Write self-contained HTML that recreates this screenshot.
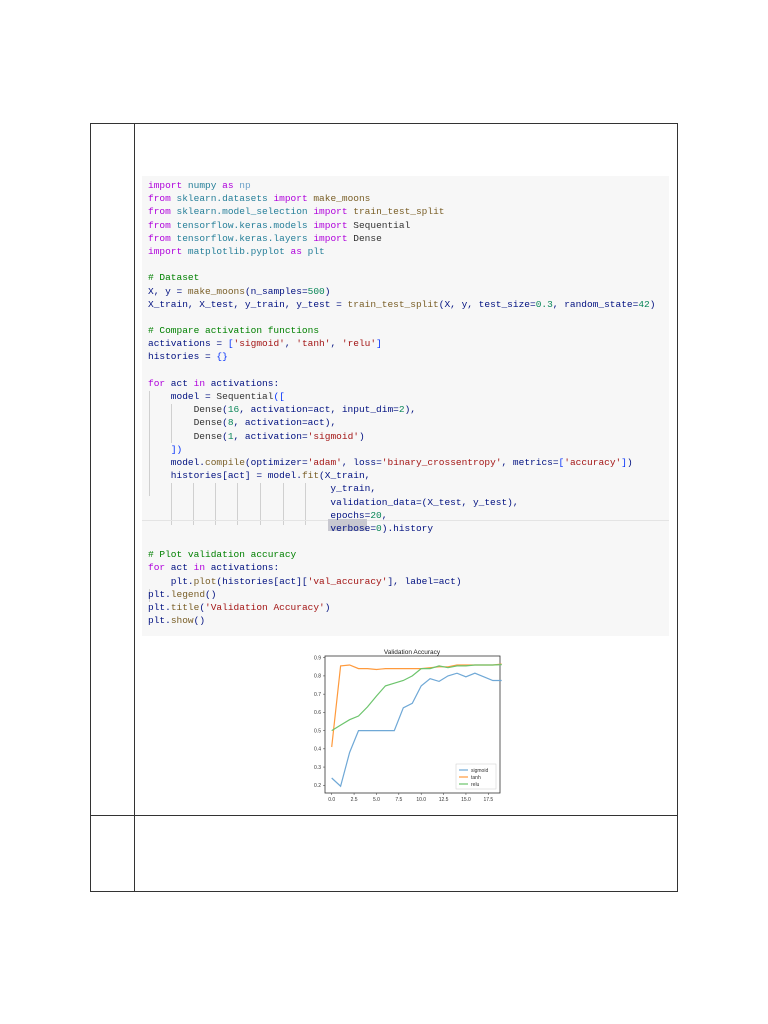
<!DOCTYPE html>
<html><head><meta charset="utf-8"><style>
body{margin:0;width:768px;height:1024px;background:#fff;position:relative;overflow:hidden}
.b{position:absolute;background:#333}
#code{position:absolute;left:142px;top:176px;width:527px;height:460px;background:#f7f7f7}
pre{position:absolute;left:6px;top:3px;margin:0;font-family:"Liberation Mono",monospace;font-size:9.5px;line-height:13.18px;color:#001080}
.k{color:#af00db}.m{color:#267f99}.f{color:#795e26}.c{color:#008000}.s{color:#a31515}.n{color:#098658}.p{color:#0431fa}.d{color:#333}.l{color:#6aa0c8}
.g{position:absolute;width:1px;background:#d0d0d0}
</style></head><body>
<div class="b" style="left:90px;top:123px;width:588px;height:1px"></div>
<div class="b" style="left:90px;top:891px;width:588px;height:1px"></div>
<div class="b" style="left:90px;top:815px;width:588px;height:1px"></div>
<div class="b" style="left:90px;top:123px;width:1px;height:769px"></div>
<div class="b" style="left:677px;top:123px;width:1px;height:769px"></div>
<div class="b" style="left:134px;top:123px;width:1px;height:769px"></div>
<div id="code">
<div class="g" style="left:7px;top:215px;height:105px"></div>
<div class="g" style="left:29px;top:228px;height:39px"></div>
<div class="g" style="left:29px;top:307px;height:42px"></div>
<div class="g" style="left:51px;top:307px;height:42px"></div>
<div class="g" style="left:73px;top:307px;height:42px"></div>
<div class="g" style="left:95px;top:307px;height:42px"></div>
<div class="g" style="left:118px;top:307px;height:42px"></div>
<div class="g" style="left:141px;top:307px;height:42px"></div>
<div class="g" style="left:163px;top:307px;height:42px"></div>
<div class="g" style="left:7px;top:413px;height:13px"></div>
<div style="position:absolute;left:0;top:344px;width:527px;height:1px;background:#e4e4e4"></div>
<div style="position:absolute;left:186px;top:343px;width:39px;height:12px;background:#c8c8d0"></div>
<pre><span class="k">import</span> <span class="m">numpy</span> <span class="k">as</span> <span class="l">np</span>
<span class="k">from</span> <span class="m">sklearn.datasets</span> <span class="k">import</span> <span class="f">make_moons</span>
<span class="k">from</span> <span class="m">sklearn.model_selection</span> <span class="k">import</span> <span class="f">train_test_split</span>
<span class="k">from</span> <span class="m">tensorflow.keras.models</span> <span class="k">import</span> <span class="d">Sequential</span>
<span class="k">from</span> <span class="m">tensorflow.keras.layers</span> <span class="k">import</span> <span class="d">Dense</span>
<span class="k">import</span> <span class="m">matplotlib.pyplot</span> <span class="k">as</span> <span class="m">plt</span>

<span class="c"># Dataset</span>
X, y = <span class="f">make_moons</span>(n_samples=<span class="n">500</span>)
X_train, X_test, y_train, y_test = <span class="f">train_test_split</span>(X, y, test_size=<span class="n">0.3</span>, random_state=<span class="n">42</span>)

<span class="c"># Compare activation functions</span>
activations = <span class="p">[</span><span class="s">'sigmoid'</span>, <span class="s">'tanh'</span>, <span class="s">'relu'</span><span class="p">]</span>
histories = <span class="p">{}</span>

<span class="k">for</span> act <span class="k">in</span> activations:
    model = <span class="d">Sequential</span><span class="p">([</span>
        <span class="d">Dense</span>(<span class="n">16</span>, activation=act, input_dim=<span class="n">2</span>),
        <span class="d">Dense</span>(<span class="n">8</span>, activation=act),
        <span class="d">Dense</span>(<span class="n">1</span>, activation=<span class="s">'sigmoid'</span>)
    <span class="p">])</span>
    model.<span class="f">compile</span>(optimizer=<span class="s">'adam'</span>, loss=<span class="s">'binary_crossentropy'</span>, metrics=<span class="p">[</span><span class="s">'accuracy'</span><span class="p">]</span>)
    histories[act] = model.<span class="f">fit</span>(X_train,
                                y_train,
                                validation_data=(X_test, y_test),
                                epochs=<span class="n">20</span>,
                                verbose=<span class="n">0</span>).history

<span class="c"># Plot validation accuracy</span>
<span class="k">for</span> act <span class="k">in</span> activations:
    plt.<span class="f">plot</span>(histories[act][<span class="s">'val_accuracy'</span>], label=act)
plt.<span class="f">legend</span>()
plt.<span class="f">title</span>(<span class="s">'Validation Accuracy'</span>)
plt.<span class="f">show</span>()</pre>
</div>
<svg id="ch" style="position:absolute;left:300px;top:640px" width="210" height="170" font-family="Liberation Sans, sans-serif" font-size="5">
<text x="112" y="14" text-anchor="middle" font-size="6.5" fill="#222">Validation Accuracy</text>
<rect x="25" y="16" width="175" height="137" fill="#fff" stroke="#333" stroke-width="0.8"/>
<g id="ticks" fill="#333"></g>
<polyline id="s" fill="none" stroke="#6fa8d6" stroke-width="1.2"/>
<polyline id="t" fill="none" stroke="#ff9a3c" stroke-width="1.2"/>
<polyline id="r" fill="none" stroke="#6cc46c" stroke-width="1.2"/>
<rect x="156" y="124" width="40" height="25" fill="#fff" stroke="#ccc" stroke-width="0.5"/>
<line x1="159" y1="130" x2="168" y2="130" stroke="#6fa8d6" stroke-width="1.2"/><text x="171" y="132" fill="#333">sigmoid</text>
<line x1="159" y1="137" x2="168" y2="137" stroke="#ff9a3c" stroke-width="1.2"/><text x="171" y="139" fill="#333">tanh</text>
<line x1="159" y1="144" x2="168" y2="144" stroke="#6cc46c" stroke-width="1.2"/><text x="171" y="146" fill="#333">relu</text>
</svg>
<script>
var X=function(i){return 31.7+i*8.95},Y=function(v){return 145.3-(v-0.2)*182.3};
var d={s:[.24,.195,.38,.5,.5,.5,.5,.5,.625,.65,.745,.785,.77,.80,.815,.795,.815,.795,.775,.775],
t:[.41,.855,.86,.84,.84,.835,.84,.84,.84,.84,.84,.845,.85,.85,.86,.86,.86,.86,.86,.865],
r:[.50,.53,.56,.58,.63,.69,.745,.76,.775,.80,.84,.84,.855,.845,.855,.855,.86,.86,.86,.862]};
for(var k in d){document.getElementById(k).setAttribute('points',d[k].map(function(v,i){return X(i).toFixed(1)+','+Y(v).toFixed(1)}).join(' '))}
var g=document.getElementById('ticks'),h='';
for(var v=2;v<=9;v++){var y=Y(v/10);h+='<text x="21" y="'+(y+1.7)+'" text-anchor="end">0.'+v+'</text><line x1="23" x2="25" y1="'+y+'" y2="'+y+'" stroke="#333" stroke-width="0.5"/>'}
for(var i=0;i<=17.5;i+=2.5){var x=X(i);h+='<text x="'+x+'" y="161" text-anchor="middle">'+i.toFixed(1)+'</text><line x1="'+x+'" x2="'+x+'" y1="153" y2="155" stroke="#333" stroke-width="0.5"/>'}
g.innerHTML=h;
</script>
</body></html>
